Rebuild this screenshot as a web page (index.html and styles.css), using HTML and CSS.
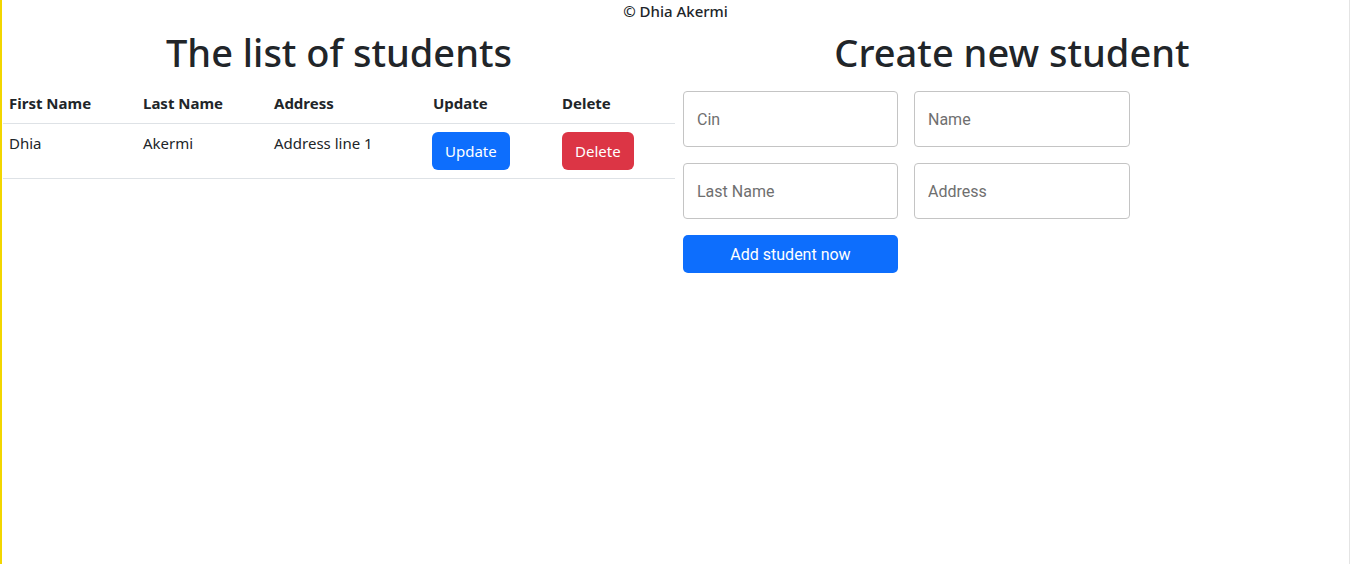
FILE: index.html
```html
<!DOCTYPE html>
<html lang="en">
<head>
    <meta charset="UTF-8">
    <meta name="viewport" content="width=device-width, initial-scale=1.0">
    <title>Students</title>
<link rel="stylesheet" href="styles.css">
</head>
<body>
    <div class="app">
        <div class="footer">© Dhia Akermi</div>
        <div class="main">
            <div class="list">
                <h1 class="title">The list of students</h1>
                <table class="table">
                    <thead>
                        <tr>
                            <th class="c1">First Name</th>
                            <th class="c2">Last Name</th>
                            <th class="c3">Address</th>
                            <th class="c4">Update</th>
                            <th class="c5">Delete</th>
                        </tr>
                    </thead>
                    <tbody>
                        <tr>
                            <td>Dhia</td>
                            <td>Akermi</td>
                            <td>Address line 1</td>
                            <td><button class="btn btn-blue">Update</button></td>
                            <td><button class="btn btn-red">Delete</button></td>
                        </tr>
                    </tbody>
                </table>
            </div>
            <div class="create">
                <h1 class="title">Create new student</h1>
                <div class="form">
                    <input type="text" class="field" placeholder="Cin">
                    <input type="text" class="field" placeholder="Name">
                    <input type="text" class="field" placeholder="Last Name">
                    <input type="text" class="field" placeholder="Address">
                    <button class="add">Add student now</button>
                </div>
            </div>
        </div>
    </div>
</body>
</html>
```

FILE: styles.css
```css
* {
    margin: 0;
    padding: 0;
    box-sizing: border-box;
}
body {
    background: white;
    font-family: "Noto Sans", "Open Sans", sans-serif;
    color: #212529;
    height: 100vh;
}
.app {
    height: 100vh;
    border-left: 2px solid #f2d600;
    border-right: 1px solid #e4e4e4;
}
.footer {
    text-align: center;
    font-size: 15px;
    font-weight: 500;
    line-height: 22px;
    height: 28px;
}
.main {
    display: flex;
}
.list {
    width: 673px;
    padding-left: 1px;
}
.create {
    flex: 1;
    padding-left: 8px;
}
.title {
    text-align: center;
    font-size: 38px;
    font-weight: 500;
    line-height: 48px;
    margin-bottom: 8px;
}
.create .title {
    padding-right: 8px;
}
.table {
    width: 100%;
    border-collapse: collapse;
    font-size: 15px;
}
.table th {
    text-align: left;
    font-weight: 700;
    padding: 8px 6px;
    line-height: 23px;
    border-bottom: 1px solid #dee2e6;
}
.table td {
    padding: 8px 6px;
    line-height: 23px;
    vertical-align: top;
    border-bottom: 1px solid #dee2e6;
}
.c1 { width: 134px; }
.c2 { width: 131px; }
.c3 { width: 159px; }
.c4 { width: 129px; }
.btn {
    font-family: inherit;
    font-size: 15px;
    line-height: 24px;
    padding: 7px 13px;
    border: none;
    border-radius: 6px;
    color: white;
}
.btn-blue {
    background: #0d6efd;
    margin-left: -1px;
}
.btn-red {
    background: #dc3545;
}
.form {
    display: grid;
    grid-template-columns: 215px 216px;
    gap: 16px;
    padding-top: 7px;
}
.field {
    height: 56px;
    border: 1px solid #c4c4c4;
    border-radius: 4px;
    padding: 0 13px;
    font-family: Roboto, sans-serif;
    font-size: 16px;
    color: #212529;
}
.field::placeholder {
    color: #6f6f6f;
}
.add {
    height: 38px;
    border: none;
    border-radius: 5px;
    background: #0d6efd;
    color: white;
    font-family: Roboto, sans-serif;
    font-size: 16px;
}
```
